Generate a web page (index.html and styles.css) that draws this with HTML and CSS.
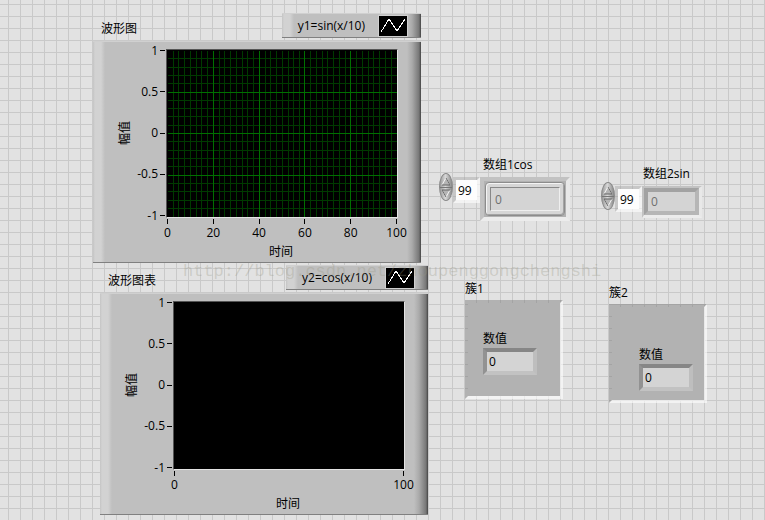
FILE: index.html
```html
<!DOCTYPE html>
<html lang="zh-CN">
<head>
  <meta charset="UTF-8">
  <meta name="viewport" content="width=device-width, initial-scale=1.0">
  <title>前面板</title>
  <link rel="stylesheet" href="styles.css">
</head>
<body>
  <main class="front-panel">

    <!-- Waveform graph -->
    <section class="graph graph-sin">
      <header class="graph-header">
        <h2 class="graph-title">波形图</h2>
        <div class="legend">
          <span>y1=sin(x/10)</span>
          <svg class="legend-plot" width="28" height="20" viewBox="0 0 28 20">
            <path d="M2 16 L10 3 L18 15 L26 3" fill="none" stroke="#fff" shape-rendering="crispEdges"/>
          </svg>
        </div>
      </header>
      <div class="graph-body">
        <span class="y-title">幅值</span>
        <ul class="y-scale">
          <li>1</li>
          <li>0.5</li>
          <li>0</li>
          <li>-0.5</li>
          <li>-1</li>
        </ul>
        <svg class="plot" viewBox="0 0 230 167">
          <path class="minor" d="M6 0v167M11 0v167M17 0v167M23 0v167M29 0v167M34 0v167M40 0v167M52 0v167M57 0v167M63 0v167M69 0v167M75 0v167M80 0v167M86 0v167M98 0v167M103 0v167M109 0v167M115 0v167M121 0v167M126 0v167M132 0v167M143 0v167M149 0v167M155 0v167M160 0v167M166 0v167M172 0v167M178 0v167M189 0v167M195 0v167M201 0v167M206 0v167M212 0v167M218 0v167M224 0v167"/>
          <path class="minor" d="M0 8h230M0 17h230M0 25h230M0 33h230M0 50h230M0 58h230M0 66h230M0 75h230M0 91h230M0 100h230M0 108h230M0 116h230M0 133h230M0 141h230M0 150h230M0 158h230"/>
          <path class="major" d="M46 0v167M92 0v167M137 0v167M183 0v167M0 42h230M0 83h230M0 125h230"/>
        </svg>
        <ul class="x-scale">
          <li>0</li>
          <li>20</li>
          <li>40</li>
          <li>60</li>
          <li>80</li>
          <li>100</li>
        </ul>
        <span class="x-title">时间</span>
      </div>
    </section>

    <!-- Waveform chart -->
    <section class="graph graph-cos">
      <header class="graph-header">
        <h2 class="graph-title">波形图表</h2>
        <div class="legend">
          <span>y2=cos(x/10)</span>
          <svg class="legend-plot" width="28" height="20" viewBox="0 0 28 20">
            <path d="M2 16 L10 3 L18 15 L26 3" fill="none" stroke="#fff" shape-rendering="crispEdges"/>
          </svg>
        </div>
      </header>
      <div class="graph-body">
        <span class="y-title">幅值</span>
        <ul class="y-scale">
          <li>1</li>
          <li>0.5</li>
          <li>0</li>
          <li>-0.5</li>
          <li>-1</li>
        </ul>
        <svg class="plot" viewBox="0 0 230 167"></svg>
        <ul class="x-scale">
          <li>0</li>
          <li>100</li>
        </ul>
        <span class="x-title">时间</span>
      </div>
    </section>

    <!-- Arrays -->
    <section class="array array-cos">
      <label class="array-label" for="array1-value">数组1cos</label>
      <div class="array-row">
        <div class="spinner">
          <button type="button" aria-label="增加"><svg width="12" height="13" viewBox="0 0 12 13"><path d="M2 11 L6 4 L10 11" fill="#b4b4b4" stroke="#f4f4f4"/><path d="M6 4 L10 11 H2" fill="none" stroke="#666"/></svg></button>
          <button type="button" aria-label="减少"><svg width="12" height="13" viewBox="0 0 12 13"><path d="M10 2 L6 9 L2 2" fill="#b4b4b4" stroke="#f4f4f4"/><path d="M10 2 H2 L6 9" fill="none" stroke="#666"/></svg></button>
        </div>
        <input class="array-index" type="text" value="99" aria-label="索引">
        <div class="array-frame framed">
          <div class="element">
            <input class="array-value" id="array1-value" type="text" value="0" readonly>
          </div>
        </div>
      </div>
    </section>

    <section class="array array-sin">
      <label class="array-label" for="array2-value">数组2sin</label>
      <div class="array-row">
        <div class="spinner">
          <button type="button" aria-label="增加"><svg width="12" height="13" viewBox="0 0 12 13"><path d="M2 11 L6 4 L10 11" fill="#b4b4b4" stroke="#f4f4f4"/><path d="M6 4 L10 11 H2" fill="none" stroke="#666"/></svg></button>
          <button type="button" aria-label="减少"><svg width="12" height="13" viewBox="0 0 12 13"><path d="M10 2 L6 9 L2 2" fill="#b4b4b4" stroke="#f4f4f4"/><path d="M10 2 H2 L6 9" fill="none" stroke="#666"/></svg></button>
        </div>
        <input class="array-index" type="text" value="99" aria-label="索引">
        <div class="array-frame plain">
          <input class="array-value" id="array2-value" type="text" value="0" readonly>
        </div>
      </div>
    </section>

    <!-- Clusters -->
    <section class="cluster cluster-one">
      <h2 class="cluster-label">簇1</h2>
      <div class="cluster-box">
        <label for="cluster1-value">数值</label>
        <input class="indicator" id="cluster1-value" type="text" value="0" readonly>
      </div>
    </section>

    <section class="cluster cluster-two">
      <h2 class="cluster-label">簇2</h2>
      <div class="cluster-box">
        <label for="cluster2-value">数值</label>
        <input class="indicator" id="cluster2-value" type="text" value="0" readonly>
      </div>
    </section>

    <p class="watermark">http://blog.csdn.net/zhoupenggongchengshi</p>
  </main>
</body>
</html>
```
FILE: styles.css
```css
* {
  box-sizing: border-box;
}
body {
  margin: 0;
  font-family: "Open Sans", "Noto Sans CJK SC", sans-serif;
  font-size: 12px;
  line-height: 16px;
  color: #000;
  background-color: #e2e2e2;
  background-image:
    linear-gradient(#c9c9c9 1px, transparent 1px),
    linear-gradient(90deg, #c9c9c9 1px, transparent 1px);
  background-size: 12px 12px;
  background-position: 8px 4px;
}
h2, p, ul {
  margin: 0;
  padding: 0;
  font-size: 12px;
  font-weight: normal;
  list-style: none;
}
input {
  font: inherit;
  color: #000;
  margin: 0;
  border-radius: 0;
  outline: none;
}

/* objects are placed freely on the panel */
.front-panel {
  position: relative;
  min-height: 100vh;
  overflow: hidden;
}
.graph, .array, .cluster, .watermark {
  position: absolute;
}
.graph-sin { left: 93px; top: 13px; }
.graph-cos { left: 100px; top: 265px; }
.array-cos { left: 439px; top: 157px; }
.array-sin { left: 601px; top: 166px; }
.cluster-one { left: 465px; top: 281px; }
.cluster-two { left: 609px; top: 285px; }

/* graphs */
.graph {
  width: 328px;
}
.graph-header {
  display: flex;
  justify-content: space-between;
  align-items: flex-start;
  height: 28px;
}
.graph-title {
  padding: 8px 0 0 8px;
}
.legend, .graph-body {
  background: linear-gradient(90deg, #c4c4c4 0, #d2d2d2 2px, #d2d2d2 8px, #bfbfbf 12px, #bfbfbf calc(100% - 14px), #aaa calc(100% - 9px), #777 calc(100% - 2px), #444 100%);
  border-top: 1px solid #d0d0d0;
  border-bottom: 1px solid #808080;
}
.legend {
  display: flex;
  align-items: center;
  gap: 14px;
  height: 25px;
  padding: 0 14px 0 16px;
}
.legend-plot {
  background: #000;
  outline: 1px solid #d0d0d0;
}
.graph-body {
  display: grid;
  grid-template-columns: 16px 1fr 232px;
  padding: 7px 23px 2px 24px;
}
.y-title {
  align-self: center;
  justify-self: center;
  writing-mode: vertical-rl;
  text-orientation: sideways;
  transform: rotate(180deg);
}
.y-scale {
  display: flex;
  flex-direction: column;
  justify-content: space-between;
  margin: 1px 1px 2px 0;
}
.y-scale li {
  display: flex;
  align-items: center;
  justify-content: flex-end;
  gap: 2px;
  height: 1px;
}
.y-scale li::after {
  content: "";
  width: 5px;
  height: 1px;
  background: #000;
}
.plot {
  display: block;
  width: 232px;
  height: 169px;
  background: #000;
  border: 1px solid #555;
  border-right-color: #e4e4e4;
  border-bottom-color: #e4e4e4;
  shape-rendering: crispEdges;
}
.plot path {
  fill: none;
  transform: translate(0.5px, 0.5px);
}
.minor { stroke: #003a00; }
.major { stroke: #007000; }
.x-scale {
  grid-column: 3;
  display: flex;
  justify-content: space-between;
  margin: 1px 1px 0;
}
.x-scale li {
  display: flex;
  flex-direction: column;
  align-items: center;
  gap: 1px;
  width: 1px;
}
.x-scale li::before {
  content: "";
  width: 1px;
  height: 5px;
  background: #000;
}
.x-title {
  grid-column: 3;
  justify-self: center;
  padding: 3px 2px 0 0;
}

/* arrays */
.array-label {
  display: block;
  padding-left: 44px;
}
.array-sin .array-label {
  padding-left: 42px;
}
.array-row {
  display: flex;
  align-items: flex-start;
}
.spinner {
  display: flex;
  flex-direction: column;
  width: 14px;
  height: 28px;
  border-radius: 50%;
  overflow: hidden;
  border: 1px solid #8a8a8a;
  background: linear-gradient(90deg, #999, #d8d8d8 45%, #888);
}
.spinner button {
  display: flex;
  justify-content: center;
  height: 13px;
  padding: 0;
  border: 0;
  background: none;
}
.spinner button + button {
  border-top: 1px solid #777;
}
.spinner svg {
  flex: none;
}
.array-index {
  width: 27px;
  height: 26px;
  margin-top: 4px;
  padding: 0 0 0 2px;
  border: 3px solid;
  border-color: rgba(160, 160, 160, 0.4) rgba(255, 255, 255, 0.6) rgba(255, 255, 255, 0.6) rgba(160, 160, 160, 0.4);
  background: #fdfdfd;
  background-clip: padding-box;
}
.array-frame {
  margin-top: 4px;
  border: 4px solid;
  border-color: #c2c2c2 #e8e8e8 #ececec #c2c2c2;
  background: #b2b2b2;
}
.array-frame.framed {
  padding: 1px;
}
.array-frame.plain {
  border-width: 2px 3px 3px 2px;
}
.element {
  padding: 4px;
  border: 1px solid #8c8c8c;
  border-radius: 4px;
  background: #d6d6d6;
  box-shadow: inset 1px 1px 0 #f4f4f4, inset -1px -1px 0 #a4a4a4;
}
.array-value {
  display: block;
  width: 55px;
  height: 27px;
  padding: 0 3px;
  border: 4px solid;
  border-color: #a2a2a2 #b6b6b6 #b6b6b6 #a2a2a2;
  background: #d4d4d4;
  color: #707070;
}
.element .array-value {
  width: 70px;
  height: 24px;
  padding: 0 4px;
  border: 1px solid #888;
  border-right-color: #efefef;
  border-bottom-color: #efefef;
}

/* clusters */
.cluster-box {
  display: flex;
  flex-direction: column;
  width: 98px;
  height: 99px;
  margin-top: 3px;
  padding: 28px 0 0 15px;
  border: 3px solid;
  border-color: rgba(120, 120, 120, 0.45) rgba(255, 255, 255, 0.6) rgba(255, 255, 255, 0.6) rgba(120, 120, 120, 0.45);
  background: #b2b2b2;
  background-clip: padding-box;
}
.cluster-two .cluster-box {
  padding: 40px 0 0 27px;
}
.indicator {
  width: 54px;
  height: 27px;
  margin-top: 1px;
  padding: 0 2px;
  border: 4px solid;
  border-color: #868686 #bebebe #c2c2c2 #929292;
  background: #d4d4d4;
}

.watermark {
  left: 183px;
  top: 262px;
  font-family: "Liberation Mono", monospace;
  font-size: 17px;
  line-height: 20px;
  color: rgba(150, 150, 130, 0.3);
  pointer-events: none;
}
```
